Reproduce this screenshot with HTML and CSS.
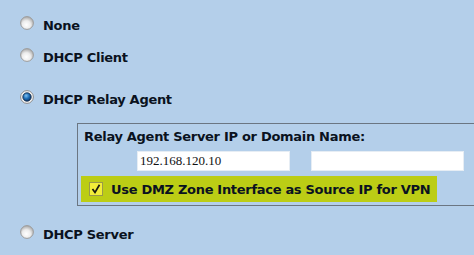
FILE: index.html
```html
<!DOCTYPE html>
<html lang="en">
  <head>
    <meta charset="UTF-8" />
    <title>DHCP Mode</title>
    <link rel="stylesheet" href="styles.css">
  </head>
  <body>
    <div class="page">
      <div class="opt opt-none">
        <svg class="radio" viewBox="0 0 14 14"><use href="#radio-off"/></svg>
        <span>None</span>
      </div>
      <div class="opt opt-client">
        <svg class="radio" viewBox="0 0 14 14"><use href="#radio-off"/></svg>
        <span>DHCP Client</span>
      </div>
      <div class="opt opt-relay">
        <svg class="radio" viewBox="0 0 14 14"><use href="#radio-on"/></svg>
        <span>DHCP Relay Agent</span>
      </div>

      <div class="relay-box">
        <div class="relay-label">Relay Agent Server IP or Domain Name:</div>
        <div class="relay-inputs">
          <input class="field" type="text" value="192.168.120.10">
          <input class="field" type="text" value="">
        </div>
        <div class="dmz">
          <svg class="check" viewBox="0 0 14 14">
            <rect x="0.5" y="0.5" width="13" height="13" fill="#f2ee3a" stroke="#9a9a4a"/>
            <path d="M3.5 7 L6 10.5 L10.5 2.8" fill="none" stroke="#1a1a10" stroke-width="1.7"/>
          </svg>
          <span>Use DMZ Zone Interface as Source IP for VPN</span>
        </div>
      </div>

      <div class="opt opt-server">
        <svg class="radio" viewBox="0 0 14 14"><use href="#radio-off"/></svg>
        <span>DHCP Server</span>
      </div>
    </div>

    <svg width="0" height="0" class="defs">
      <defs>
        <radialGradient id="g-off" cx="0.45" cy="0.65" r="0.6">
          <stop offset="0" stop-color="#ffffff"/>
          <stop offset="0.55" stop-color="#ececec"/>
          <stop offset="1" stop-color="#b0b0b0"/>
        </radialGradient>
        <radialGradient id="g-dot" cx="0.4" cy="0.35" r="0.7">
          <stop offset="0" stop-color="#7fc0f0"/>
          <stop offset="0.5" stop-color="#1f6fb8"/>
          <stop offset="1" stop-color="#0b2f5e"/>
        </radialGradient>
        <g id="radio-off">
          <circle cx="7" cy="7" r="6.4" fill="url(#g-off)" stroke="#9c9c9c" stroke-width="1"/>
        </g>
        <g id="radio-on">
          <circle cx="7" cy="7" r="6.4" fill="#f4f4f4" stroke="#8c8c8c" stroke-width="1"/>
          <circle cx="7" cy="7" r="4.2" fill="url(#g-dot)" stroke="#0a2240" stroke-width="0.8"/>
        </g>
      </defs>
    </svg>
  </body>
</html>
```

FILE: styles.css
```css
body {
  margin: 0;
  background-color: #b4cfea;
  font-family: "DejaVu Sans", Verdana, sans-serif;
  font-weight: bold;
  font-size: 13px;
  letter-spacing: -0.3px;
  color: #0a1220;
  width: 474px;
  height: 255px;
  overflow: hidden;
}
.defs {
  position: absolute;
}
.page {
  padding-top: 18px;
}
.opt {
  display: flex;
  align-items: flex-start;
  gap: 9px;
  padding-left: 20px;
  line-height: 16px;
}
.radio {
  width: 14px;
  height: 14px;
  margin-top: -2px;
}
.opt-client {
  margin-top: 16px;
}
.opt-relay {
  margin-top: 26px;
}
.opt-server {
  margin-top: 21px;
}
.relay-box {
  margin: 15px 0 0 77px;
  border: 1px solid #6b7682;
  border-right: none;
  padding: 5px 3px 3px 3px;
}
.relay-label {
  margin-left: 3px;
  line-height: 16px;
}
.relay-inputs {
  display: flex;
  gap: 21px;
  margin: 6px 0 0 56px;
}
.field {
  width: 153px;
  height: 20px;
  box-sizing: border-box;
  border: 1px solid #e6edf4;
  background: #fff;
  padding: 0 2px;
  font-family: "Liberation Serif", "Times New Roman", serif;
  font-size: 13px;
  letter-spacing: 0;
  color: #111;
  outline: none;
}
.dmz {
  display: flex;
  align-items: center;
  gap: 8px;
  margin-top: 5px;
  width: 356px;
  height: 26px;
  box-sizing: border-box;
  padding-left: 8px;
  white-space: nowrap;
  background-color: #bccd15;
}
.check {
  width: 14px;
  height: 14px;
}
```
